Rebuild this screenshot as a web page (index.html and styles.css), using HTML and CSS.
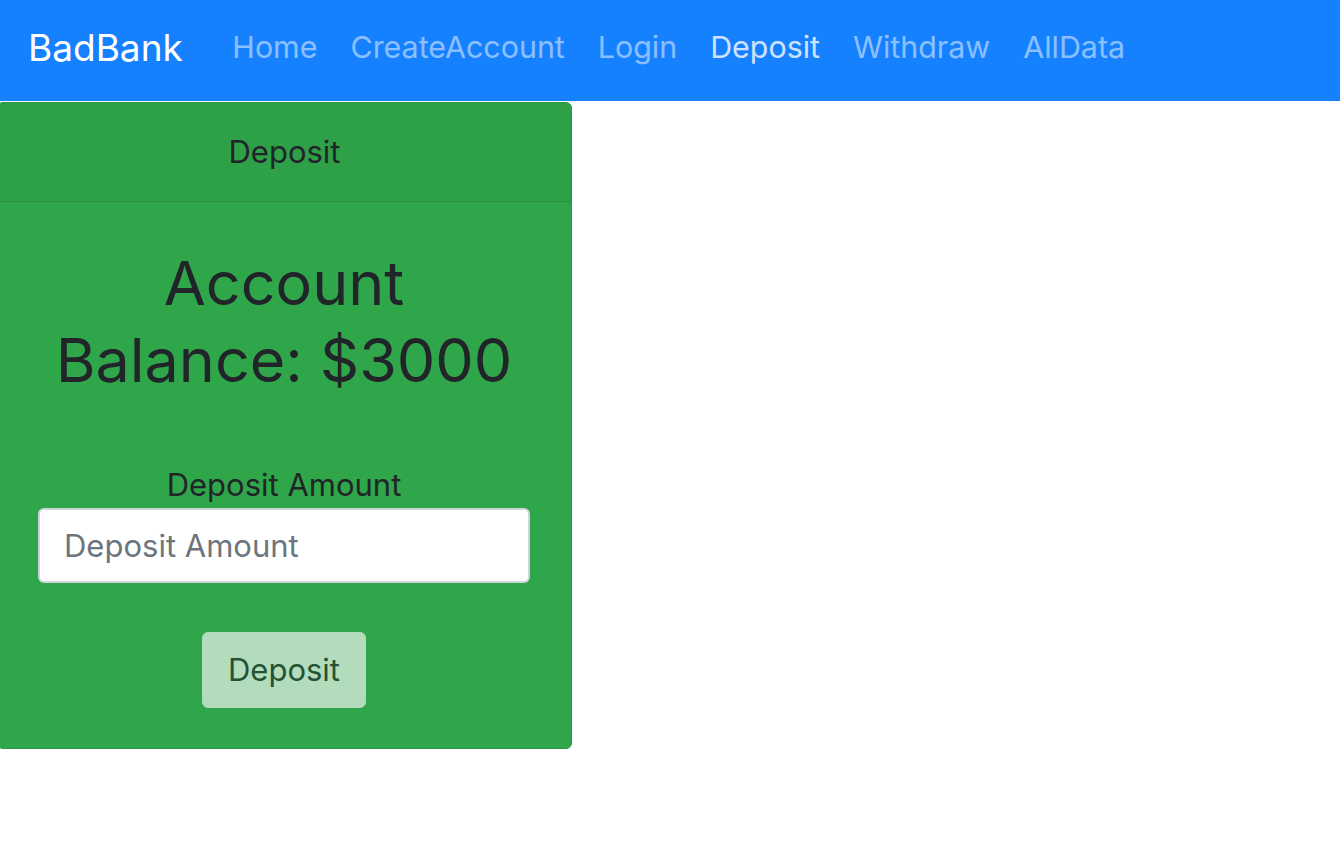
FILE: index.html
```html
<!DOCTYPE html>
<html lang="en">
<head>
<meta charset="utf-8">
<title>BadBank</title>
<link rel="stylesheet" href="styles.css">
</head>
<body>
<nav class="navbar">
  <a class="brand" href="#">BadBank</a>
  <ul class="nav">
    <li><a class="nav-link" href="#">Home</a></li>
    <li><a class="nav-link" href="#">CreateAccount</a></li>
    <li><a class="nav-link" href="#">Login</a></li>
    <li><a class="nav-link active" href="#">Deposit</a></li>
    <li><a class="nav-link" href="#">Withdraw</a></li>
    <li><a class="nav-link" href="#">AllData</a></li>
  </ul>
</nav>
<div class="card">
  <div class="card-header">Deposit</div>
  <div class="card-body">
    <h2 class="balance">Account<br>Balance: $3000</h2>
    <label class="label" for="amount">Deposit Amount</label>
    <input class="input" id="amount" type="text" placeholder="Deposit Amount">
    <button class="btn" type="button" disabled>Deposit</button>
  </div>
</div>
</body>
</html>
```

FILE: styles.css
```css
* { box-sizing: border-box; }
html, body { margin: 0; padding: 0; }
body {
  font-family: Inter, "Noto Sans", sans-serif;
  font-size: 31px;
  line-height: 1.5;
  color: #212529;
  background: #fff;
}
.navbar {
  height: 101px;
  background: #1681ff;
  display: flex;
  align-items: center;
  padding: 0 28px 6px;
}
.brand {
  color: #fff;
  text-decoration: none;
  font-size: 37px;
  margin-right: 33px;
}
.nav {
  list-style: none;
  display: flex;
  margin: 0;
  padding: 0;
  font-size: 30.4px;
}
.nav-link {
  display: block;
  padding: 0 16.5px;
  color: rgba(255,255,255,0.5);
  text-decoration: none;
}
.nav-link.active { color: rgba(255,255,255,0.8); }
.card {
  width: 575px;
  margin-left: -3px;
  margin-top: 1px;
  background: #2fa64a;
  border: 1px solid #2a9443;
  border-radius: 6px;
  overflow: hidden;
}
.card-header {
  height: 99px;
  padding-top: 1px;
  background: #2ea047;
  border-bottom: 1px solid #2a9042;
  display: flex;
  align-items: center;
  justify-content: center;
}
.card-body {
  padding: 43px 41px 40px 40px;
  display: flex;
  flex-direction: column;
  align-items: center;
}
.balance {
  margin: 0 0 63px;
  font-size: 61px;
  font-weight: 400;
  line-height: 77px;
  text-align: center;
}
.label { display: block; line-height: 46px; }
.input {
  width: 100%;
  height: 75px;
  margin: 0;
  padding: 0 24px;
  font: inherit;
  color: #495057;
  background: #fff;
  border: 2px solid #ced4da;
  border-radius: 6px;
}
.input::placeholder { color: #6c757d; }
.btn {
  margin-top: 49px;
  width: 164px;
  height: 76px;
  font: inherit;
  color: #212529;
  background: #f8f9fa;
  border: 1px solid #f8f9fa;
  border-radius: 6px;
  opacity: 0.65;
}
```
